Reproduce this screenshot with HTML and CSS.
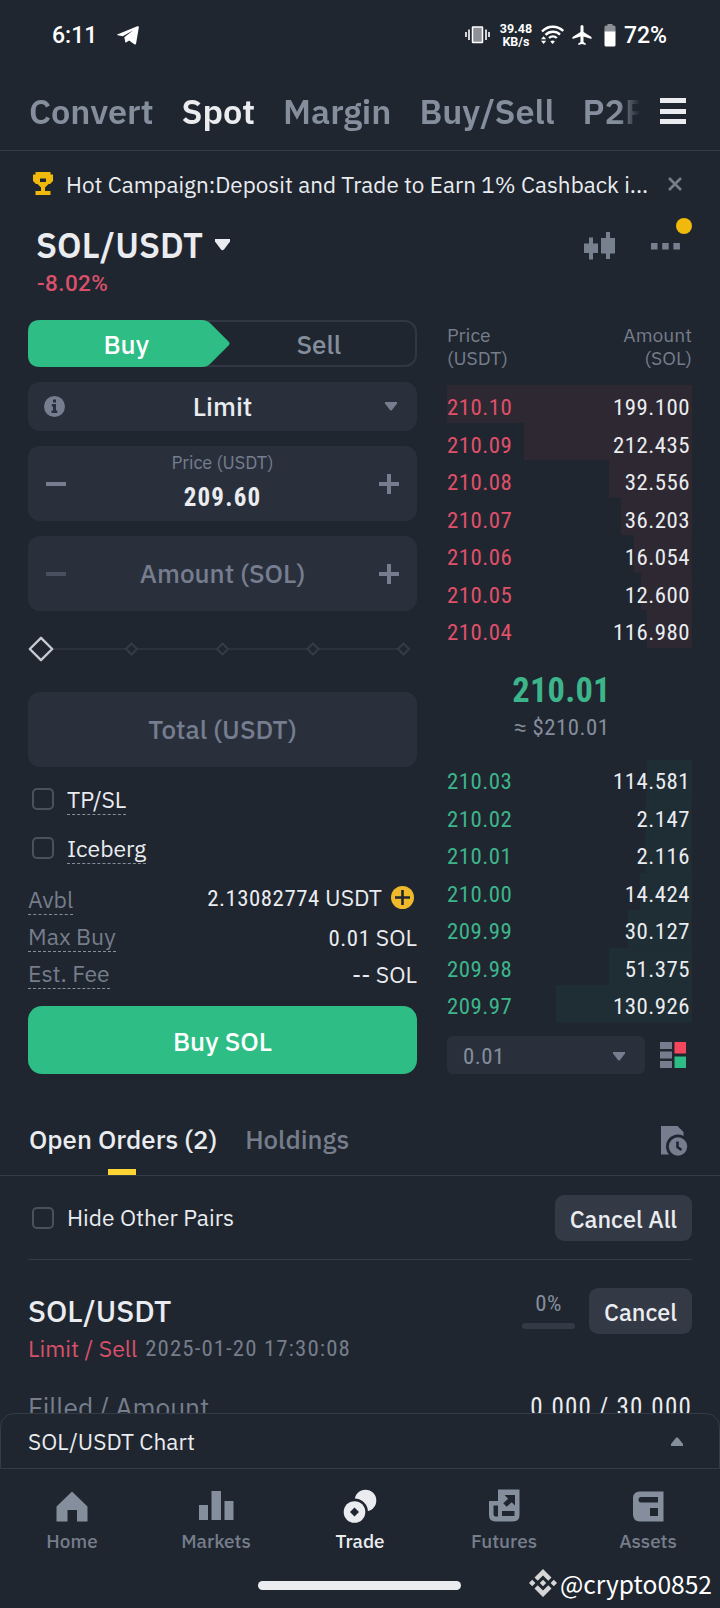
FILE: index.html
```
<!DOCTYPE html>
<html lang="en">

<head>
  <meta charset="UTF-8">
  <meta name="viewport" content="width=device-width, initial-scale=1.0">
  <title>SOL/USDT Spot</title>
  <link rel="stylesheet" href="styles.css">
</head>

<body>
  <div class="screen">
    <!-- status bar -->
    <div class="status">
      <span class="time">6:11</span>
      <svg class="telegram" width="22" height="19" viewBox="0 0 22 19"><path fill="#fff" d="M.8 8.200 20.300.3c1-.4 1.700.2 1.500 1.300l-2.700 15.800c-.2 1.100-.9 1.300-1.800.8l-5.200-3.700-2.600 1.800c-.6.400-1 .2-1.200-.4l-1-4.700 8.900-6.900L5.800 10.300.8 9.300c-1-.3-.8-.8 0-1.100z"/></svg>
      <div class="status-right">
        <svg class="vibrate" width="25" height="18" viewBox="0 0 25 18">
          <rect x="7.500" y="1" width="10" height="15.500" rx=".5" fill="#8d9197" stroke="#fff" stroke-width="1.500"/>
          <path d="M1 6v5M4 3.500v10.500M21 3.500v10.500M24 6v5" stroke="#fff" stroke-width="1.600"/>
        </svg>
        <span class="speed">39.48<br>KB/s</span>
        <svg class="wifi" width="23" height="20" viewBox="0 0 23 20">
          <path d="M1 6.500C7 .3 16.500.3 22.200 6M4.500 9.800c4.200-4 10.500-4 14.500-.2M8 13c2.300-2.200 5.500-2.200 7.800 0" fill="none" stroke="#fff" stroke-width="2.400"/>
          <path d="M9.300 16.500q2.300-2 4.600 0L11.600 19zM0 14.200l2.600-3 2.600 3zM0 15.700l2.600 3.300 2.600-3.300z" fill="#fff"/>
        </svg>
        <svg class="plane" width="20" height="20" viewBox="2 2 20 20"><path fill="#fff" d="M21.500 16v-2l-8-5V3.500a1.500 1.500 0 0 0-3 0V9l-8 5v2l8-2.500V19l-2.200 1.600V22l3.700-1 3.700 1v-1.400L13.500 19v-5.500z"/></svg>
        <svg class="battery" width="12" height="23" viewBox="0 0 12 23">
          <path d="M3.500 0h5v1.500h1.500q1.500 0 1.500 1.500v5H.5V3Q.5 1.500 2 1.500h1.500z" fill="#8d9197"/>
          <path d="M.5 7.500h11V21q0 1.500-1.500 1.500H2Q.5 22.500.5 21z" fill="#fff"/>
        </svg>
        <span class="percent">72%</span>
      </div>
    </div>

    <!-- top tabs -->
    <div class="tabs">
      <div class="tab-list">
        <span>Convert</span>
        <span class="active">Spot</span>
        <span>Margin</span>
        <span>Buy/Sell</span>
        <span>P2P</span>
      </div>
      <div class="burger"><i></i><i></i><i></i></div>
    </div>

    <div class="content">
      <!-- notice -->
      <div class="notice">
        <svg width="20" height="23" viewBox="0 0 20 23"><path fill="#f0b90b" fill-rule="evenodd" d="M2.500 0h15v2.500H20V9l-3 3h-1.500l-3.500 3.500v3.500h5.500v4h-15v-4H8v-3.500L4.500 12H3L0 9V2.500h2.500zM7 6.500v3.500h6V6.500z"/></svg>
        <p>Hot Campaign:Deposit and Trade to Earn 1% Cashback i...</p>
        <svg class="close" width="14" height="14" viewBox="0 0 14 14"><path d="M1 1l12 12M13 1 1 13" stroke="#767d8b" stroke-width="2.600"/></svg>
      </div>

      <!-- pair -->
      <div class="pair">
        <h1>SOL/USDT</h1>
        <svg width="15" height="12" viewBox="0 0 15 12"><path fill="#eaecef" d="M0 0h15v2.500L9 10.500q-1.500 1.500-3 0L0 2.500z"/></svg>
        <div class="pair-tools">
          <svg width="31" height="28" viewBox="0 0 31 28"><path fill="#76808f" d="M5 5.500h4V11.500h5V21H9v6.500H5V21H0v-9.500h5zM22 0h4v6h5v15.500h-5V27h-4v-5.500h-5V6h5z"/></svg>
          <svg class="dots" width="29" height="7" viewBox="0 0 29 7"><path fill="#76808f" d="M0 0h6.500v6.500H0zM11.200 0h6.500v6.500h-6.500zM22.400 0h6.500v6.500h-6.500z"/></svg>
          <i class="badge"></i>
        </div>
      </div>
      <div class="change">-8.02%</div>

      <div class="trade">
        <!-- order form -->
        <div class="form">
          <div class="side">
            <svg width="202" height="47" viewBox="0 0 202 47"><path fill="#2ebd85" d="M12 0H174q5 0 8.500 3.500L200.500 21.500q2 2 0 4L182.500 43.500Q179 47 174 47H12Q0 47 0 35V12Q0 0 12 0z"/></svg>
            <span class="buy">Buy</span>
            <span>Sell</span>
          </div>

          <div class="field type">
            <svg width="21" height="21" viewBox="0 0 21 21"><circle cx="10.500" cy="10.500" r="10.500" fill="#767d8f"/><path fill="#29303c" d="M9 3.500h3v3H9zM7.800 8H12v6.500h1.300V17H7.500v-2.500H9v-4H7.800z"/></svg>
            <span>Limit</span>
            <svg width="12" height="9" viewBox="0 0 12 9"><path fill="#767d8f" d="M0 0h12v1.500L7 8Q6 9 5 8L0 1.500z"/></svg>
          </div>

          <div class="field">
            <i class="minus"></i>
            <div class="value">
              <small>Price (USDT)</small>
              <b class="num">209.60</b>
            </div>
            <i class="plus"></i>
          </div>

          <div class="field">
            <i class="minus off"></i>
            <span class="hint">Amount (SOL)</span>
            <i class="plus"></i>
          </div>

          <svg class="slider" width="389" height="26" viewBox="0 0 389 26">
            <path d="M25 13H370" stroke="#2b323e" stroke-width="2"/>
            <g fill="#1f2630" stroke="#333b47" stroke-width="2">
              <path d="M103.500 7.500l5.500 5.500-5.500 5.500L98 13z"/>
              <path d="M194.500 7.500l5.500 5.500-5.500 5.500L189 13z"/>
              <path d="M285 7.500l5.500 5.500-5.500 5.500L279.500 13z"/>
              <path d="M375.500 7.500l5.500 5.500-5.500 5.500L370 13z"/>
            </g>
            <path d="M13 1.800L24.200 13 13 24.200 1.800 13z" fill="#1f2630" stroke="#c5cad1" stroke-width="2.400" stroke-linejoin="round"/>
          </svg>

          <div class="field total">
            <span class="hint">Total (USDT)</span>
          </div>

          <div class="check"><i class="box"></i><span class="tip">TP/SL</span></div>
          <div class="check"><i class="box"></i><span class="tip">Iceberg</span></div>

          <div class="info">
            <div class="info-row first">
              <span class="tip">Avbl</span>
              <span class="amount"><span class="num">2.13082774</span> USDT</span>
              <svg width="23" height="23" viewBox="0 0 23 23"><circle cx="11.500" cy="11.500" r="11.500" fill="#f0b92b"/><path d="M11.500 4v15M4 11.500h15" stroke="#1f2630" stroke-width="2.600"/></svg>
            </div>
            <div class="info-row">
              <span class="tip">Max Buy</span>
              <span class="amount"><span class="num">0.01</span> SOL</span>
            </div>
            <div class="info-row">
              <span class="tip">Est. Fee</span>
              <span class="amount">-- SOL</span>
            </div>
          </div>

          <div class="submit">Buy SOL</div>
        </div>

        <!-- order book -->
        <div class="book">
          <div class="book-head">
            <span>Price<br>(USDT)</span>
            <span>Amount<br>(SOL)</span>
          </div>
          <div class="rows asks num" id="asks"></div>
          <div class="last">
            <b class="num">210.01</b>
            <span>≈ <span class="num">$210.01</span></span>
          </div>
          <div class="rows bids num" id="bids"></div>
          <div class="depth">
            <div class="select">
              <span class="num">0.01</span>
              <svg width="12" height="9" viewBox="0 0 12 9"><path fill="#767d8f" d="M0 0h12v1.500L7 8Q6 9 5 8L0 1.500z"/></svg>
            </div>
            <svg width="26" height="26" viewBox="0 0 26 26">
              <path fill="#767d8f" d="M0 0h12v7H0zM0 9.500h12v7H0zM0 19h12v7H0z"/>
              <path fill="#f6465d" d="M14.500 0H26v11.500H14.500z"/>
              <path fill="#2ebd85" d="M14.500 14.500H26V26H14.500z"/>
            </svg>
          </div>
        </div>
      </div>

      <!-- orders -->
      <div class="order-tabs">
        <span class="active">Open Orders (2)</span>
        <span>Holdings</span>
        <svg width="27" height="30" viewBox="0 0 27 30">
          <path fill="#767d8f" d="M0 0h16.500l6 6v6H0zM0 10h22v3.500L8 28.500H0z"/>
          <circle cx="17" cy="20.500" r="12" fill="#1f2630"/>
          <circle cx="17" cy="20.500" r="9.200" fill="#767d8f"/>
          <path d="M16.500 15.500v5.500l4 3" fill="none" stroke="#1f2630" stroke-width="2.600"/>
        </svg>
      </div>
      <div class="filter">
        <i class="box"></i>
        <span>Hide Other Pairs</span>
        <span class="btn">Cancel All</span>
      </div>
      <div class="order">
        <div class="order-top">
          <h2>SOL/USDT</h2>
          <div class="progress"><span class="num">0%</span><i></i></div>
          <span class="btn">Cancel</span>
        </div>
        <div class="order-meta"><span class="sell">Limit / Sell</span><span class="num">2025-01-20 17:30:08</span></div>
        <div class="order-line"><span>Filled / Amount</span><span class="num">0.000 / 30.000</span></div>
      </div>
    </div>

    <!-- chart panel -->
    <div class="chart">
      <span>SOL/USDT Chart</span>
      <svg width="12" height="9" viewBox="0 0 12 9"><path fill="#848e9c" d="M0 9h12V7L7 .8Q6 0 5 .8L0 7z"/></svg>
    </div>

    <!-- bottom nav -->
    <div class="nav">
      <div class="nav-item">
        <svg width="36" height="36" viewBox="0 0 36 36"><path fill="#848e9c" d="M18 3.500L33.500 18.500V33.500H23V22h-9.500v11.500H2.500V18.500z"/></svg>
        <span>Home</span>
      </div>
      <div class="nav-item">
        <svg width="36" height="36" viewBox="0 0 36 36"><path fill="#848e9c" d="M1 17h9v15H1zM13.500 3h9.500v29h-9.500zM26.500 13h9v19h-9z"/></svg>
        <span>Markets</span>
      </div>
      <div class="nav-item active">
        <svg width="36" height="36" viewBox="0 0 36 36">
          <circle cx="23.500" cy="12.500" r="10.800" fill="#eaecef"/>
          <circle cx="12.500" cy="24" r="13.500" fill="#1f2630"/>
          <circle cx="12.500" cy="24" r="10.800" fill="#eaecef"/>
          <path fill="#1f2630" d="M12.500 19.500L17 24l-4.500 4.500L8 24z"/>
        </svg>
        <span>Trade</span>
      </div>
      <div class="nav-item">
        <svg width="36" height="36" viewBox="0 0 36 36">
          <path fill="#848e9c" fill-rule="evenodd" d="M12 1.500h21.500V27q0 6.500-6.500 6.500H9.500Q3 33.500 3 27V13h9zM7.500 17.500v8q0 3 2 3H12v-11z"/>
          <path fill="#1f2630" d="M16 23h12.500v5H16zM18.500 7h10.500v10.500l-3.300-3.300-5 4.500-3.500-3.500 5-4.500z"/>
        </svg>
        <span>Futures</span>
      </div>
      <div class="nav-item">
        <svg width="36" height="36" viewBox="0 0 36 36">
          <path fill="#848e9c" d="M9.500 3.500H33.500v30H10q-7-.500-7-7V10q0-6 6.500-6.500z"/>
          <path fill="#1f2630" d="M11 9h17v5.500H11q-2.500 0-2.500-2.700T11 9zM20 20h8v8h-8z"/>
        </svg>
        <span>Assets</span>
      </div>
    </div>

    <div class="footer">
      <i class="home-bar"></i>
      <div class="mark">
        <svg width="28" height="28" viewBox="0 0 28 28"><path fill="#d6d6d6" d="M14 0l8.500 8.500-3.200 3.200L14 6.400l-5.300 5.300-3.200-3.200zM14 28l8.500-8.500-3.200-3.200-5.300 5.300-5.300-5.300-3.200 3.200zM14 10.800l3.200 3.200-3.200 3.200-3.200-3.200zM3.200 10.800L6.400 14l-3.200 3.200L0 14zM24.800 10.800L28 14l-3.200 3.200-3.200-3.200z"/></svg>
        <span>@crypto0852</span>
      </div>
    </div>
  </div>

  <script>
    // price, amount, depth bar width in %
    var asks = [
      ['210.10', '199.100', 100],
      ['210.09', '212.435', 68.5],
      ['210.08', '32.556', 34],
      ['210.07', '36.203', 29],
      ['210.06', '16.054', 23.5],
      ['210.05', '12.600', 20.8],
      ['210.04', '116.980', 18.3]
    ]
    var bids = [
      ['210.03', '114.581', 18.3],
      ['210.02', '2.147', 18.6],
      ['210.01', '2.116', 19],
      ['210.00', '14.424', 21.2],
      ['209.99', '30.127', 26],
      ['209.98', '51.375', 34],
      ['209.97', '130.926', 55.5]
    ]

    function render(id, list) {
      var html = ''
      for (var i = 0; i < list.length; i++) {
        html += '<div class="row" style="--depth: ' + list[i][2] + '%"><span>' + list[i][0] + '</span><span>' + list[i][1] + '</span></div>'
      }
      document.getElementById(id).innerHTML = html
    }

    render('asks', asks)
    render('bids', bids)
  </script>
</body>

</html>
```
FILE: styles.css
```
* {
  box-sizing: border-box;
  margin: 0;
  padding: 0;
}

body {
  background: #1f2630;
  color: #eaecef;
  font-family: "IBM Plex Sans", Roboto, sans-serif;
  font-size: 23px;
}

svg,
i {
  display: block;
  flex: none;
}

.num {
  font-family: "Roboto Condensed", Roboto, sans-serif;
  font-size: 22.8px;
  letter-spacing: .5px;
}

.screen {
  width: 720px;
  height: 1608px;
  display: flex;
  flex-direction: column;
  overflow: hidden;
}

/* status bar */
.status {
  height: 72px;
  flex: none;
  display: flex;
  align-items: center;
  padding: 0 53px 2px 52px;
  font-family: Roboto, sans-serif;
  font-size: 23px;
  font-weight: 500;
  color: #fff;
}

.telegram {
  margin-left: 20px;
}

.status-right {
  margin-left: auto;
  display: flex;
  align-items: center;
}

.speed {
  width: 34px;
  margin: 0 8px 0 9px;
  font-size: 12.5px;
  line-height: 13px;
  font-weight: 700;
  text-align: center;
}

.plane {
  margin: 0 12px 0 8px;
}

.battery {
  margin-right: 8px;
}

.percent {
  font-size: 23px;
}

/* top tabs */
.tabs {
  height: 79px;
  flex: none;
  display: flex;
  align-items: center;
  border-bottom: 1px solid #333b47;
  padding-left: 29px;
}

.tab-list {
  width: 611px;
  display: flex;
  gap: 28px;
  overflow: hidden;
  white-space: nowrap;
  font-size: 34.3px;
  font-weight: 600;
  line-height: 50px;
  color: #848e9c;
  -webkit-mask-image: linear-gradient(90deg, #000 590px, transparent 611px);
  mask-image: linear-gradient(90deg, #000 590px, transparent 611px);
}

.tab-list .active {
  color: #eaecef;
}

.burger {
  margin-left: 20px;
  display: flex;
  flex-direction: column;
  gap: 5.5px;
}

.burger i {
  width: 26px;
  height: 5px;
  background: #eaecef;
}

.content {
  flex: 1;
  min-height: 0;
  overflow: hidden;
}

/* notice */
.notice {
  height: 67px;
  display: flex;
  align-items: center;
  padding: 0 38px 0 33px;
  font-size: 22.5px;
}

.notice svg {
  margin-bottom: 2px;
}

.notice p {
  margin-left: 13px;
  white-space: nowrap;
}

.notice .close {
  margin: 0 0 2px auto;
}

/* pair */
.pair {
  height: 54px;
  display: flex;
  align-items: center;
  padding-left: 36px;
}

.pair h1 {
  margin-right: 12px;
  font-size: 34.5px;
  font-weight: 600;
}

.pair-tools {
  position: relative;
  margin: 2px 40px 0 auto;
  display: flex;
  align-items: center;
  gap: 36px;
}

.badge {
  position: absolute;
  right: -12px;
  top: -14px;
  width: 16px;
  height: 16px;
  border-radius: 50%;
  background: #f0b90b;
}

.change {
  height: 24px;
  line-height: 23px;
  padding-left: 37px;
  font-family: Roboto, sans-serif;
  font-size: 22.5px;
  font-weight: 500;
  letter-spacing: .4px;
  color: #d9506a;
}

/* order form */
.trade {
  display: flex;
  gap: 30px;
  margin-top: 24px;
  padding: 0 28px;
}

.form {
  width: 389px;
}

.side {
  position: relative;
  display: flex;
  height: 47px;
  border: 2px solid #303743;
  border-radius: 12px;
  line-height: 45px;
  font-size: 26px;
  font-weight: 500;
  text-align: center;
  color: #848e9c;
}

.side svg {
  position: absolute;
  left: -2px;
  top: -2px;
}

.side span {
  position: relative;
  flex: 1;
}

.side .buy {
  color: #fff;
}

.field {
  height: 75px;
  margin-top: 15px;
  padding: 0 18px;
  display: flex;
  align-items: center;
  justify-content: space-between;
  background: #29303c;
  border-radius: 12px;
  font-size: 26px;
  font-weight: 500;
}

.field > span {
  padding-bottom: 2px;
}

.type {
  height: 49px;
  padding: 0 20px 0 16px;
}

.type > span {
  margin-right: 5px;
}

.minus,
.plus {
  width: 20px;
  height: 20px;
  background: linear-gradient(#767d8f, #767d8f) center / 20px 4px no-repeat;
}

.plus {
  background: linear-gradient(#767d8f, #767d8f) center / 20px 4px no-repeat,
    linear-gradient(#767d8f, #767d8f) center / 4px 20px no-repeat;
}

.off {
  opacity: .4;
}

.value {
  display: flex;
  flex-direction: column;
  align-items: center;
  padding-bottom: 6px;
}

.value small {
  font-size: 18px;
  font-weight: 400;
  line-height: 34px;
  color: #767d8f;
}

.value b {
  font-size: 25px;
  line-height: 36px;
  letter-spacing: 1.2px;
}

.hint {
  color: #767d8f;
}

.slider {
  margin: 25px 0 30px;
}

.total {
  margin-top: 0;
  margin-bottom: 8px;
  justify-content: center;
}

.check {
  height: 49px;
  display: flex;
  align-items: center;
  padding-left: 4px;
}

.box {
  width: 22px;
  height: 22px;
  margin: 0 13px 1px 0;
  border: 2px solid #4a515d;
  border-radius: 5px;
}

.tip {
  line-height: 30px;
  border-bottom: 1px dashed #848e9c;
}

.info {
  margin-top: 8px;
}

.info-row {
  height: 37px;
  display: flex;
  align-items: center;
}

.info-row .tip {
  margin-right: auto;
  color: #767d8b;
}

.first .amount {
  padding-bottom: 5px;
}

.info-row svg {
  margin: 0 3px 5px 9px;
}

.submit {
  height: 68px;
  margin-top: 14px;
  border-radius: 14px;
  background: #2ebd85;
  line-height: 70px;
  text-align: center;
  font-size: 26px;
  font-weight: 500;
  color: #fff;
}

/* order book */
.book {
  width: 245px;
}

.book-head {
  display: flex;
  justify-content: space-between;
  padding-top: 3px;
  height: 65px;
  font-size: 19.3px;
  line-height: 23px;
  color: #767d8b;
}

.book-head span:last-child {
  text-align: right;
}

.row {
  height: 37.5px;
  display: flex;
  justify-content: space-between;
  padding: 8px 2px 0 0;
  line-height: 30px;
  background: linear-gradient(var(--bar), var(--bar)) right / var(--depth) 100% no-repeat;
}

.asks {
  --bar: #2d2832;
}

.bids {
  --bar: #1f2d35;
}

.asks span:first-child {
  color: #e0506a;
}

.bids span:first-child {
  color: #3db58a;
}

.bids .row {
  padding-top: 7px;
}

.last {
  height: 112.5px;
  padding: 22px 16px 0 0;
  display: flex;
  flex-direction: column;
  align-items: center;
}

.last b {
  font-size: 34.5px;
  line-height: 40px;
  letter-spacing: .2px;
  color: #3db58a;
}

.last > span {
  line-height: 33px;
  color: #848e9c;
}

.depth {
  display: flex;
  align-items: center;
  justify-content: space-between;
  padding-right: 6px;
  margin-top: 13.5px;
}

.select {
  width: 198px;
  height: 38px;
  padding: 2px 20px 0 16px;
  display: flex;
  align-items: center;
  justify-content: space-between;
  background: #29303c;
  border-radius: 6px;
  color: #848e9c;
}

/* orders */
.order-tabs {
  height: 73px;
  margin-top: 29px;
  padding: 0 32px 0 29px;
  display: flex;
  align-items: center;
  gap: 28px;
  border-bottom: 1px solid #333b47;
  font-size: 25.8px;
  font-weight: 500;
  color: #767d8b;
}

.order-tabs span {
  line-height: 70px;
  padding-top: 2px;
}

.order-tabs .active {
  position: relative;
  color: #eaecef;
}

.order-tabs .active::after {
  content: "";
  position: absolute;
  left: 79px;
  bottom: 0;
  width: 28px;
  height: 6px;
  background: #fcd535;
}

.order-tabs svg {
  margin: 3px 0 0 auto;
}

.filter {
  height: 84px;
  margin: 0 28px;
  padding-left: 4px;
  display: flex;
  align-items: center;
  border-bottom: 1px solid #333b47;
  font-size: 22.8px;
}

.filter .box {
  margin-bottom: 0;
}

.btn {
  height: 46px;
  padding: 0 15px;
  border-radius: 9px;
  background: #333945;
  line-height: 48px;
  font-size: 23.5px;
  font-weight: 500;
}

.filter .btn {
  margin-left: auto;
}

.order {
  padding: 28px 28px 0;
}

.order-top {
  display: flex;
  height: 46px;
  align-items: center;
}

.order-top h2 {
  padding-bottom: 2px;
  font-size: 30px;
  font-weight: 500;
}

.progress {
  width: 53px;
  margin: 0 14px 7px auto;
  text-align: center;
  line-height: 30px;
  color: #848e9c;
}

.progress i {
  height: 6px;
  margin-top: 4px;
  border-radius: 3px;
  background: #333945;
}

.order-meta {
  display: flex;
  gap: 8px;
  line-height: 29px;
  color: #767d8b;
}

.order-meta .num {
  letter-spacing: 1.1px;
}

.sell {
  color: #d9506a;
}

.order-line {
  display: flex;
  justify-content: space-between;
  margin-top: 26px;
  line-height: 37px;
  font-size: 26.3px;
}

.order-line span:first-child {
  color: #767d8b;
}

.order-line .num {
  font-size: 25px;
  letter-spacing: 1.2px;
}

/* chart panel */
.chart {
  height: 56px;
  flex: none;
  display: flex;
  align-items: center;
  justify-content: space-between;
  padding: 0 36px 0 27px;
  border: 1px solid #333b47;
  border-radius: 14px 14px 0 0;
  font-size: 22.7px;
}

/* bottom nav */
.nav {
  height: 100px;
  flex: none;
  display: flex;
  padding-top: 19px;
}

.nav-item {
  flex: 1;
  display: flex;
  flex-direction: column;
  align-items: center;
  gap: 5px;
  font-size: 18.9px;
  font-weight: 500;
  line-height: 24px;
  color: #767d8b;
}

.nav-item.active {
  color: #eaecef;
}

.footer {
  position: relative;
  height: 39px;
  flex: none;
}

.home-bar {
  width: 203px;
  height: 9px;
  margin: 12px 0 0 258px;
  border-radius: 5px;
  background: #eaecef;
}

.mark {
  position: absolute;
  right: 8px;
  top: 0;
  display: flex;
  align-items: center;
  gap: 3px;
  font-family: "Noto Sans CJK SC", sans-serif;
  font-size: 24.6px;
  line-height: 28px;
  color: #fff;
}
```
